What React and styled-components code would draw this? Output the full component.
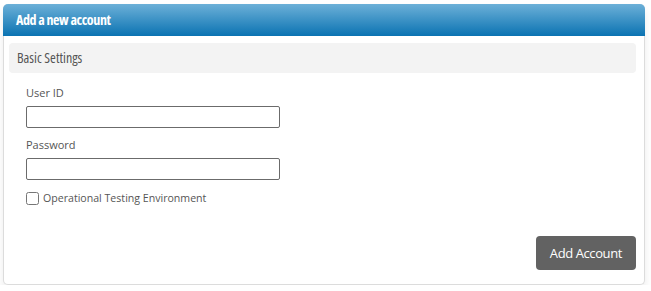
import React, { useState } from "react";
import styled, { createGlobalStyle } from "styled-components";

const GlobalStyle = createGlobalStyle`
  body {
    margin: 0;
    background: #ffffff;
    font-family: "Open Sans", "Liberation Sans", sans-serif;
  }
`;

const App = () => {
  const [userId, setUserId] = useState("");
  const [password, setPassword] = useState("");
  const [testEnv, setTestEnv] = useState(false);

  return (
    <>
      <GlobalStyle />
      <Page>
        <Panel>
          <PanelHeader>Add a new account</PanelHeader>
          <PanelBody>
            <SectionTitle>Basic Settings</SectionTitle>
            <Form>
              <Field>
                <Label htmlFor="userId">User ID</Label>
                <Input id="userId" value={userId} onChange={(e) => setUserId(e.target.value)} />
              </Field>
              <Field>
                <Label htmlFor="password">Password</Label>
                <Input
                  id="password"
                  type="password"
                  value={password}
                  onChange={(e) => setPassword(e.target.value)}
                />
              </Field>
              <CheckRow>
                <Checkbox
                  type="checkbox"
                  checked={testEnv}
                  onChange={(e) => setTestEnv(e.target.checked)}
                />
                Operational Testing Environment
              </CheckRow>
            </Form>
            <Footer>
              <SubmitButton>Add Account</SubmitButton>
            </Footer>
          </PanelBody>
        </Panel>
      </Page>
    </>
  );
};

export default App;

// ---------- Styled Components ----------

const Page = styled.div`
  padding: 4px 8px 0 3px;
`;

const Panel = styled.div`
  width: 640px;
  border: 1px solid #dcdcdc;
  border-top: none;
  border-radius: 5px;
  background: #ffffff;
  box-shadow: 0 6px 8px rgba(0, 0, 0, 0.08);
`;

const PanelHeader = styled.div`
  height: 32px;
  line-height: 31px;
  padding: 0 13px;
  margin: 0 -1px;
  border-radius: 5px 5px 0 0;
  background: linear-gradient(to bottom, #6cb0d8 0%, #0b73b2 100%);
  color: #ffffff;
  font-size: 14px;
  font-weight: 700;
  font-stretch: condensed;
  letter-spacing: -0.4px;
`;

const PanelBody = styled.div`
  padding: 7px 8px 14px 5px;
`;

const SectionTitle = styled.div`
  height: 30px;
  line-height: 30px;
  padding: 0 8px;
  border-radius: 4px;
  background: #f3f3f3;
  color: #555555;
  font-size: 14px;
  font-stretch: condensed;
`;

const Form = styled.div`
  display: flex;
  flex-direction: column;
  gap: 9px;
  padding: 12px 0 0 17px;
`;

const Field = styled.div`
  display: flex;
  flex-direction: column;
  gap: 6px;
`;

const Label = styled.label`
  color: #555555;
  font-size: 11px;
`;

const Input = styled.input`
  box-sizing: border-box;
  width: 254px;
  height: 22px;
  border: 1px solid #6b6b6b;
  border-radius: 2px;
  padding: 0 4px;
  font-size: 12px;
  outline: none;
`;

const CheckRow = styled.label`
  display: flex;
  align-items: center;
  gap: 4px;
  margin-top: 2px;
  color: #555555;
  font-size: 10.6px;
`;

const Checkbox = styled.input`
  margin: 0;
  width: 13px;
  height: 13px;
`;

const Footer = styled.div`
  display: flex;
  justify-content: flex-end;
  margin-top: 31px;
`;

const SubmitButton = styled.button`
  height: 34px;
  padding: 0 14px;
  border: none;
  border-radius: 4px;
  background: #626262;
  color: #ffffff;
  font-family: "Open Sans", "Liberation Sans", sans-serif;
  font-size: 13px;
  letter-spacing: -0.4px;
  cursor: pointer;
`;
